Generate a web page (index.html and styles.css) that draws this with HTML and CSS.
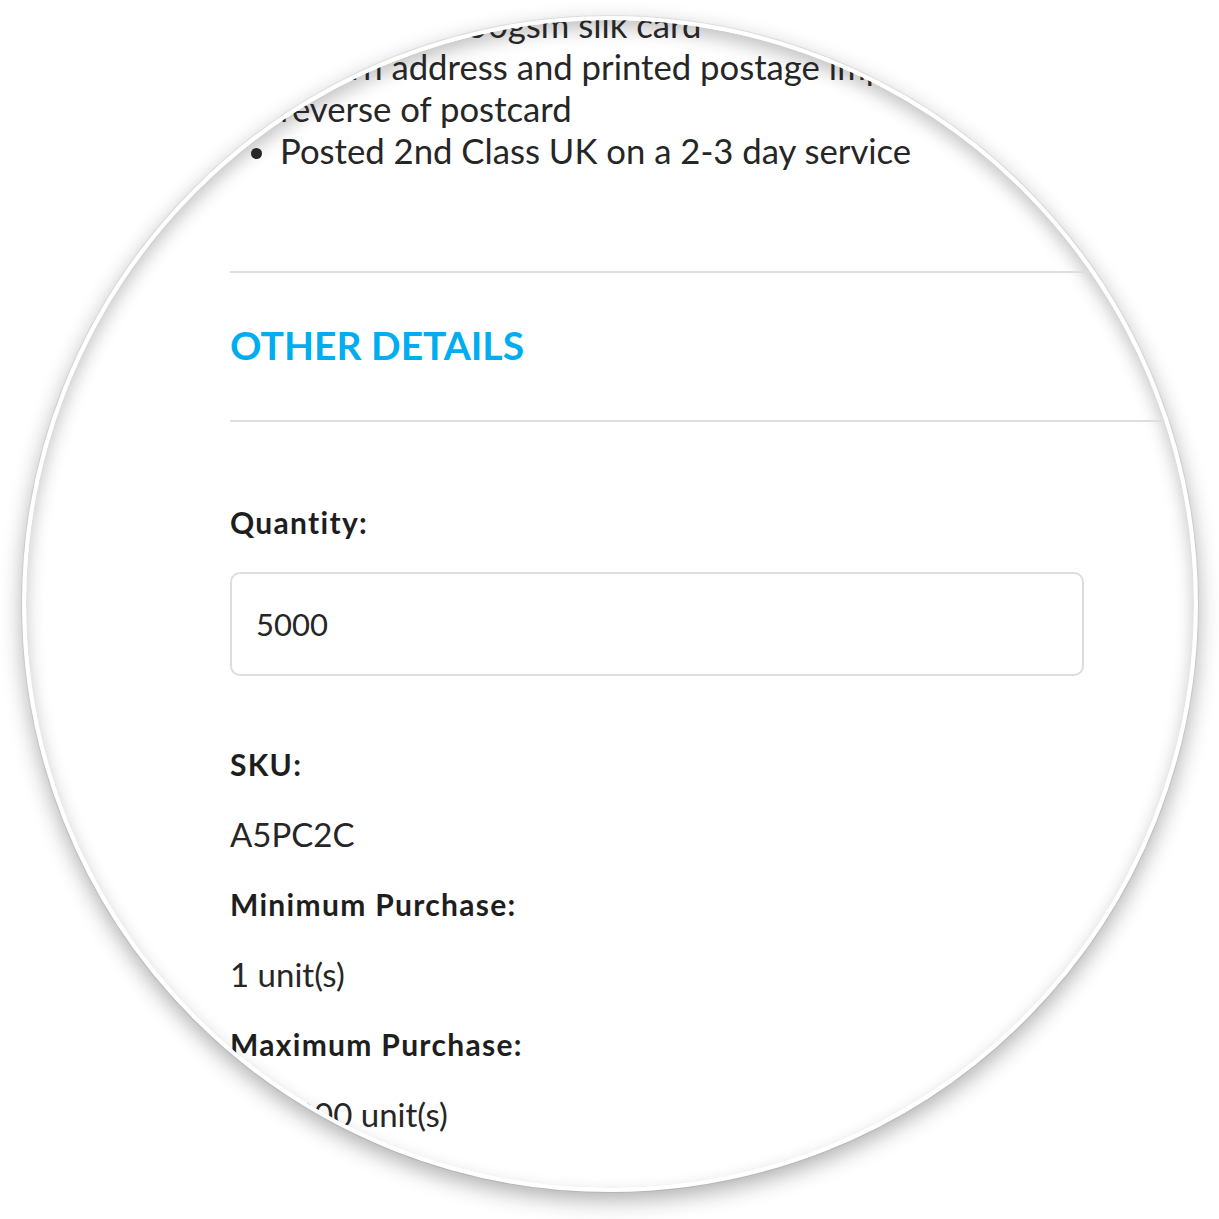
FILE: index.html
```html
<!DOCTYPE html>
<html lang="en">
<head>
<meta charset="utf-8">
<title>Other details</title>
<link rel="stylesheet" href="styles.css">
</head>
<body>
<div class="lens">
  <div class="page">
    <ul class="features">
      <li>Printed on 350gsm silk card</li>
      <li>Return address and printed postage impression on reverse of postcard</li>
      <li>Posted 2nd Class UK on a 2-3 day service</li>
    </ul>
    <hr class="rule rule-top">
    <h2 class="section-title">OTHER DETAILS</h2>
    <hr class="rule rule-bottom">
    <div class="field">
      <label class="label" for="qty">Quantity:</label>
      <input class="qty-input" id="qty" type="text" value="5000">
    </div>
    <dl class="details">
      <dt class="label">SKU:</dt>
      <dd class="value">A5PC2C</dd>
      <dt class="label">Minimum Purchase:</dt>
      <dd class="value">1 unit(s)</dd>
      <dt class="label">Maximum Purchase:</dt>
      <dd class="value">100,000 unit(s)</dd>
    </dl>
  </div>
</div>
</body>
</html>
```

FILE: styles.css
```css
html, body {
  margin: 0;
  padding: 0;
  background: #ffffff;
}

body {
  width: 1219px;
  height: 1219px;
  overflow: hidden;
  font-family: "Lato", "Open Sans", sans-serif;
  color: #262626;
}

.lens {
  box-sizing: border-box;
  width: 1176px;
  height: 1176px;
  margin: 16px 0 0 22px;
  border: 4px solid #ffffff;
  border-radius: 50%;
  overflow: hidden;
  background: #ffffff;
  box-shadow:
    0 0 0 1px rgba(0, 0, 0, 0.07),
    0 8px 22px rgba(0, 0, 0, 0.32),
    inset 0 8px 18px rgba(0, 0, 0, 0.24);
}

.page {
  width: 1100px;
  padding-left: 204px;
}

.features {
  margin: -16px 0 0 0;
  padding-left: 50px;
  width: 830px;
  font-size: 34.7px;
  line-height: 42px;
  list-style: disc;
}

.features li {
  margin: 0;
}

.rule {
  border: 0;
  height: 2px;
  background: #dedede;
  margin: 0;
  width: 1000px;
}

.rule-top {
  margin-top: 99px;
}

.section-title {
  margin: 48px 0 51px 0;
  font-size: 39px;
  line-height: 48px;
  font-weight: 700;
  color: #00aeef;
  letter-spacing: 0;
}

.field {
  display: flex;
  flex-direction: column;
  align-items: flex-start;
  margin-top: 82px;
}

.label {
  display: block;
  font-size: 30px;
  line-height: 36px;
  font-weight: 700;
  letter-spacing: 1.3px;
  color: #1e1e1e;
  margin: 0;
}

.qty-input {
  box-sizing: border-box;
  margin-top: 32px;
  width: 854px;
  height: 104px;
  border: 2px solid #dddddd;
  border-radius: 10px;
  padding: 0 24px;
  font-family: "Lato", "Open Sans", sans-serif;
  font-size: 31px;
  color: #262626;
  background: #ffffff;
  outline: none;
}

.details {
  margin: 70px 0 0 0;
  display: flex;
  flex-direction: column;
  gap: 32px;
}

.value {
  margin: 0;
  font-size: 33px;
  line-height: 40px;
  color: #262626;
}
```
